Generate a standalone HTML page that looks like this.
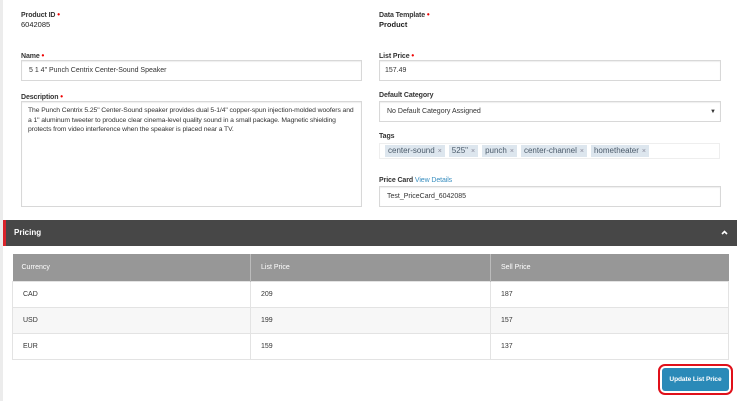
<!DOCTYPE html>
<html><head><style>
*{box-sizing:border-box;margin:0;padding:0}
body{width:737px;height:401px;background:#fff;font-family:"Liberation Sans",sans-serif;font-size:7px;color:#333;position:relative;overflow:hidden}
.strip{position:absolute;left:0;top:0;width:3px;height:401px;background:#ececec}
.a{position:absolute}
.lbl{font-size:7px;color:#333;font-weight:bold;letter-spacing:-0.1px}
.lbl b{color:#e00;font-size:8px}
.val{font-size:7.5px;color:#222}
.inp{position:absolute;border:1px solid #d8d8d8;background:#fff;font-size:7px;color:#333;padding-left:7px;display:flex;align-items:center;box-shadow:inset 0 1px 1px #eee}
.tag{display:inline-block;background:#dde6ee;color:#4a5a6a;font-size:8px;padding:0 3px;margin-right:4px;height:12px;line-height:12px}
.tag i{font-style:normal;color:#889;font-size:7px;margin-left:3px}
table{position:absolute;left:12px;top:254px;width:717px;border-collapse:collapse;font-size:7px}
th{background:#979797;color:#fff;font-weight:normal;text-align:left;height:27px;padding-left:10px;border-left:1px solid #bbb}
th:first-child{border-left:none;padding-left:9px}
td{height:26px;padding-left:10px;border:1px solid #e3e3e3;color:#333}
tr.g td{background:#f7f7f7}
</style></head><body>
<div class="strip"></div>
<div class="a lbl" style="left:21px;top:10px">Product ID <b>•</b></div>
<div class="a val" style="left:21px;top:20px">6042085</div>
<div class="a lbl" style="left:379px;top:10px">Data Template <b>•</b></div>
<div class="a val" style="left:379px;top:20px;font-weight:bold">Product</div>

<div class="a lbl" style="left:21px;top:51px">Name <b>•</b></div>
<div class="inp" style="left:21px;top:60px;width:341px;height:21px">5 1 4" Punch Centrix Center-Sound Speaker</div>
<div class="a lbl" style="left:21px;top:92px">Description <b>•</b></div>
<div class="inp" style="left:21px;top:101px;width:341px;height:106px;display:block;padding:4px 3px 4px 6px;line-height:9.6px;font-size:6.8px;letter-spacing:-0.1px">The Punch Centrix 5.25" Center-Sound speaker provides dual 5-1/4" copper-spun injection-molded woofers and a 1" aluminum tweeter to produce clear cinema-level quality sound in a small package. Magnetic shielding protects from video interference when the speaker is placed near a TV.</div>

<div class="a lbl" style="left:379px;top:51px">List Price <b>•</b></div>
<div class="inp" style="left:379px;top:60px;width:342px;height:21px;padding-left:5px">157.49</div>
<div class="a lbl" style="left:379px;top:92px">Default Category</div>
<div class="inp" style="left:379px;top:101px;width:342px;height:21px">No Default Category Assigned<span style="position:absolute;right:4px;font-size:6px">▼</span></div>
<div class="a lbl" style="left:379px;top:133px">Tags</div>
<div class="inp" style="left:379px;top:143px;width:341px;height:16px;padding-left:5px;box-shadow:none;border-color:#eee"><span class="tag">center-sound<i>×</i></span><span class="tag">525"<i>×</i></span><span class="tag">punch<i>×</i></span><span class="tag">center-channel<i>×</i></span><span class="tag">hometheater<i>×</i></span></div>
<div class="a lbl" style="left:379px;top:177px">Price Card <span style="color:#3a8fc0;font-weight:normal">View Details</span></div>
<div class="inp" style="left:379px;top:186px;width:342px;height:21px">Test_PriceCard_6042085</div>

<div class="a" style="left:3px;top:220px;width:734px;height:26px;background:#474747;border-left:3px solid #d9232a;color:#fff;font-weight:bold;font-size:8px;line-height:26px;padding-left:8px">Pricing<svg style="position:absolute;right:9px;top:10px" width="7" height="5" viewBox="0 0 7 5"><path d="M1 4L3.5 1.5L6 4" stroke="#fff" stroke-width="1.6" fill="none"/></svg></div>

<table>
<tr><th style="width:238px">Currency</th><th style="width:240px">List Price</th><th>Sell Price</th></tr>
<tr><td>CAD</td><td>209</td><td>187</td></tr>
<tr class="g"><td>USD</td><td>199</td><td>157</td></tr>
<tr><td>EUR</td><td>159</td><td>137</td></tr>
</table>

<div class="a" style="left:658px;top:364px;width:75px;height:31px;border:2px solid #e0101a;border-radius:7px"></div>
<div class="a" style="left:662px;top:368px;width:67px;height:23px;background:#2a8ab8;border-radius:3px;color:#fff;font-size:6.6px;font-weight:bold;text-align:center;line-height:23px;letter-spacing:-0.1px">Update List Price</div>
</body></html>
